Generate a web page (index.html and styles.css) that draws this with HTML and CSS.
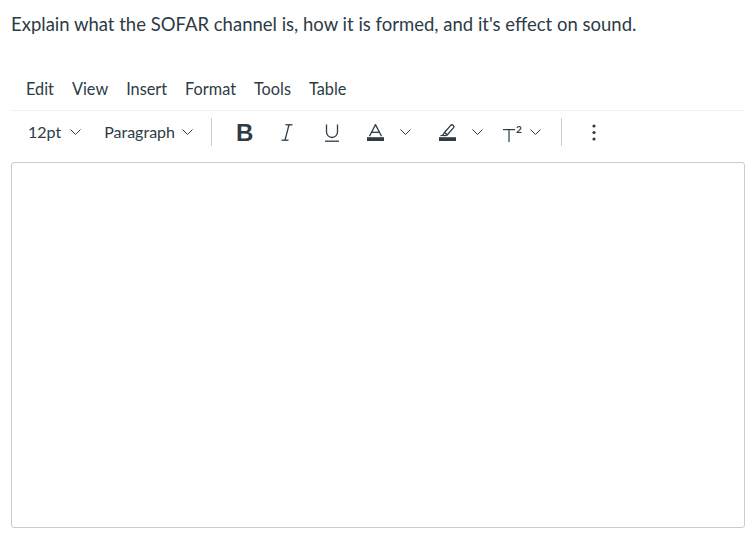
FILE: index.html
```html
<!DOCTYPE html>
<html lang="en">
<head>
<meta charset="utf-8">
<title>Question</title>
<link rel="stylesheet" href="styles.css">
</head>
<body>
<p class="question">Explain what the SOFAR channel is, how it is formed, and it's effect on sound.</p>
<div class="rce">
  <div class="menubar">
    <span class="menu-item">Edit</span>
    <span class="menu-item">View</span>
    <span class="menu-item">Insert</span>
    <span class="menu-item">Format</span>
    <span class="menu-item">Tools</span>
    <span class="menu-item">Table</span>
  </div>
  <div class="toolbar">
    <span class="tb-text size">12pt</span>
    <svg class="chev c1" width="11" height="6" viewBox="0 0 11 6"><polyline points="0.5,0.5 5.5,5.5 10.5,0.5" fill="none" stroke="#2d3b45" stroke-width="1"/></svg>
    <span class="tb-text para">Paragraph</span>
    <svg class="chev c2" width="11" height="6" viewBox="0 0 11 6"><polyline points="0.5,0.5 5.5,5.5 10.5,0.5" fill="none" stroke="#2d3b45" stroke-width="1"/></svg>
    <span class="divider d1"></span>
    <span class="bold-b">B</span>
    <svg class="ico ital" width="12" height="17" viewBox="0 0 12 17"><g fill="none" stroke="#2d3b45" stroke-width="1.3"><line x1="4.5" y1="0.8" x2="11.5" y2="0.8"/><line x1="0.5" y1="16.2" x2="7.5" y2="16.2"/><line x1="8" y1="0.8" x2="4" y2="16.2"/></g></svg>
    <svg class="ico under" width="16" height="18" viewBox="0 0 16 18"><g fill="none" stroke="#2d3b45" stroke-width="1.3"><path d="M2.5 0.5 V8 A5.5 5.5 0 0 0 13.5 8 V0.5"/><line x1="1" y1="17.2" x2="15" y2="17.2"/></g></svg>
    <svg class="ico acol" width="17" height="17" viewBox="0 0 17 17"><g fill="none" stroke="#2d3b45" stroke-width="1.3"><polyline points="2.5,12.2 8.5,0.6 14.5,12.2"/><line x1="4.6" y1="8.3" x2="12.4" y2="8.3"/></g><rect x="0" y="13.2" width="17" height="3.8" fill="#2d3b45"/></svg>
    <svg class="chev c3" width="11" height="6" viewBox="0 0 11 6"><polyline points="0.5,0.5 5.5,5.5 10.5,0.5" fill="none" stroke="#2d3b45" stroke-width="1"/></svg>
    <svg class="ico hl" width="17" height="17" viewBox="0 0 17 17"><g fill="none" stroke="#2d3b45" stroke-width="1.3" stroke-linejoin="round"><path d="M5.5 8.5 L11.5 1.6 A1.8 1.8 0 0 1 14.4 3.9 L8.4 10.8 Z"/><path d="M5.5 8.5 L3.6 11.4 L6 11.6 L8.4 10.8"/><line x1="1.5" y1="11.6" x2="3.6" y2="11.4"/></g><rect x="0" y="13.2" width="17" height="3.8" fill="#2d3b45"/></svg>
    <svg class="chev c4" width="11" height="6" viewBox="0 0 11 6"><polyline points="0.5,0.5 5.5,5.5 10.5,0.5" fill="none" stroke="#2d3b45" stroke-width="1"/></svg>
    <span class="sup-wrap"><svg class="tglyph" width="12" height="13" viewBox="0 0 12 13"><g fill="none" stroke="#2d3b45" stroke-width="1.2"><line x1="0" y1="0.6" x2="12" y2="0.6"/><line x1="6" y1="0.6" x2="6" y2="13"/></g></svg><span class="sup-2">2</span></span>
    <svg class="chev c5" width="11" height="6" viewBox="0 0 11 6"><polyline points="0.5,0.5 5.5,5.5 10.5,0.5" fill="none" stroke="#2d3b45" stroke-width="1"/></svg>
    <span class="divider d2"></span>
    <svg class="ico dots" width="4" height="17" viewBox="0 0 4 17"><circle cx="2" cy="2" r="1.6" fill="#2d3b45"/><circle cx="2" cy="8.5" r="1.6" fill="#2d3b45"/><circle cx="2" cy="15" r="1.6" fill="#2d3b45"/></svg>
  </div>
  <div class="editor-area"></div>
</div>
</body>
</html>
```
FILE: styles.css
```css
html, body {
  margin: 0;
  padding: 0;
  background: #ffffff;
}
body {
  font-family: Lato, "Open Sans", "Liberation Sans", sans-serif;
  color: #2d3b45;
}
.question {
  margin: 0;
  padding: 12px 11px 0 11px;
  font-size: 18.5px;
  line-height: 24px;
}
.rce {
  margin: 32px 11px 0 11px;
}
.menubar {
  display: flex;
  align-items: center;
  height: 40px;
  padding-bottom: 2px;
  padding-left: 6px;
  border-bottom: 1px solid #eef0f1;
  font-size: 16.3px;
}
.menu-item {
  padding: 0 9px;
}
.toolbar {
  display: flex;
  align-items: center;
  height: 42px;
  padding-left: 17px;
  font-size: 16px;
}
.tb-text {
  line-height: 20px;
}
.chev {
  display: block;
  flex: none;
}
.ico {
  display: block;
  flex: none;
}
.c1 { margin-left: 9px; }
.para { margin-left: 23px; }
.c2 { margin-left: 7px; }
.divider {
  display: block;
  width: 1px;
  height: 28px;
  background: #c7cdd1;
  flex: none;
}
.d1 { margin-left: 18px; }
.bold-b {
  margin-left: 24px;
  width: 15px;
  font-family: "Liberation Sans", "DejaVu Sans", sans-serif;
  font-weight: bold;
  font-size: 24px;
  line-height: 24px;
  margin-top: 2px;
}
.ital { margin-left: 30px; }
.under { margin-left: 31px; margin-top: 1px; }
.acol { margin-left: 27px; }
.c3 { margin-left: 16px; }
.hl { margin-left: 28px; }
.c4 { margin-left: 16px; }
.sup-wrap {
  margin-left: 20px;
  display: flex;
  align-items: flex-start;
  width: 19px;
  height: 18px;
  margin-top: 1px;
}
.tglyph {
  display: block;
  margin-top: 5px;
}
.sup-2 {
  font-size: 10px;
  font-weight: bold;
  line-height: 10px;
  margin-left: 1px;
}
.c5 { margin-left: 8px; }
.d2 { margin-left: 20px; }
.dots { margin-left: 30px; }
.editor-area {
  margin-top: 9px;
  height: 364px;
  border: 1px solid #c7cdd1;
  border-radius: 3px;
  margin-right: -1px;
}
```
